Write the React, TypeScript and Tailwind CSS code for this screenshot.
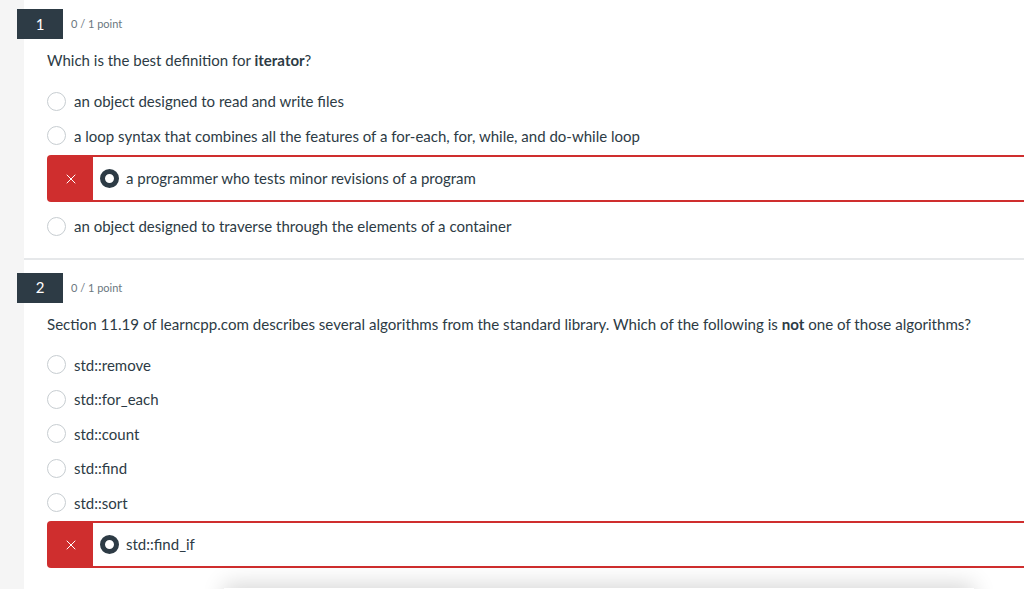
import { X } from "lucide-react"

type Option = { text: string; wrong?: boolean }

const q1: Option[] = [
  { text: "an object designed to read and write files" },
  { text: "a loop syntax that combines all the features of a for-each, for, while, and do-while loop" },
  { text: "a programmer who tests minor revisions of a program", wrong: true },
  { text: "an object designed to traverse through the elements of a container" },
]

const q2: Option[] = [
  { text: "std::remove" },
  { text: "std::for_each" },
  { text: "std::count" },
  { text: "std::find" },
  { text: "std::sort" },
  { text: "std::find_if", wrong: true },
]

function Radio({ checked }: { checked?: boolean }) {
  if (checked) {
    return <span className="block w-[19px] h-[19px] rounded-full border-[5px] border-[#2d3b45] bg-white shrink-0" />
  }
  return <span className="block w-[19px] h-[19px] rounded-full border border-[#c7cdd1] bg-white shrink-0" />
}

function Answer({ opt }: { opt: Option }) {
  if (opt.wrong) {
    return (
      <div className="flex h-[47px] ml-[23px] border-2 border-r-0 border-[#cf2e2e] rounded-l-[4px] bg-white">
        <div className="w-[44px] bg-[#cf2e2e] flex items-center justify-center">
          <X size={16} strokeWidth={1.5} className="text-white" />
        </div>
        <div className="flex items-center gap-[7px] pl-[7px]">
          <Radio checked />
          <span>{opt.text}</span>
        </div>
      </div>
    )
  }
  return (
    <div className="flex items-center gap-[8px] h-[34.5px] ml-[23px]">
      <Radio />
      <span>{opt.text}</span>
    </div>
  )
}

function Header({ n }: { n: number }) {
  return (
    <div className="flex items-center">
      <div className="-ml-[7px] w-[46px] h-[30px] bg-[#2d3b45] text-white text-[15px] flex items-center justify-center">
        {n}
      </div>
      <span className="ml-[8px] text-[11px] text-[#6b7780] pt-[1px]">0 / 1 point</span>
    </div>
  )
}

export default function App() {
  const wrong1 = q1.findIndex(o => o.wrong)
  return (
    <div className="h-screen bg-[#f5f5f5] pl-[24px] overflow-hidden" style={{ fontFamily: "Lato, 'Open Sans', sans-serif" }}>
      <div className="bg-white text-[#2d3b45] text-[15px] h-full">
        <section className="pt-[9px] pb-[14px] border-b-2 border-[#e6e8ea]">
          <Header n={1} />
          <p className="ml-[23px] mt-[10px] text-[15px] leading-[22px]">
            Which is the best definition for <b>iterator</b>?
          </p>
          <div className="mt-[13px]">
            {q1.map((o, i) => (
              <div key={i} className={i === wrong1 ? "mt-[2px] mb-[7px]" : ""}>
                <Answer opt={o} />
              </div>
            ))}
          </div>
        </section>
        <section className="pt-[13px]">
          <Header n={2} />
          <p className="ml-[23px] mt-[10px] text-[15.1px] leading-[22px]">
            Section 11.19 of learncpp.com describes several algorithms from the standard library. Which of the following is <b>not</b> one of those algorithms?
          </p>
          <div className="mt-[13px]">
            {q2.map((o, i) => (
              <div key={i} className={o.wrong ? "mt-[1px]" : ""}>
                <Answer opt={o} />
              </div>
            ))}
          </div>
          <div className="mt-[20px] ml-[200px] mr-[50px] h-[40px] bg-white shadow-[0_-4px_22px_rgba(0,0,0,0.16)]" />
        </section>
      </div>
    </div>
  )
}
